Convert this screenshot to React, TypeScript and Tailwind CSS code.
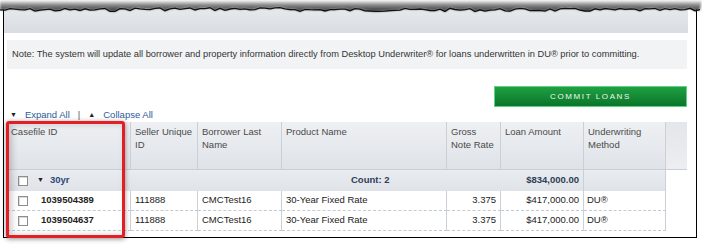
import React from "react";

const cols = "grid grid-cols-[124px_67px_84px_165px_54px_83px_82px_21px]";

function TornEdge() {
  // jagged paper edge along the top of the clipped screenshot
  const pts: string[] = [];
  let seed = 7;
  for (let x = 0; x <= 702; x += 5) {
    seed = (seed * 9301 + 49297) % 233280;
    const y = 8.3 + (seed / 233280) * 3.2 - (x > 120 && x < 300 ? 0.8 : 0);
    pts.push(`${x},${y.toFixed(1)}`);
  }
  const line = "M" + pts.join(" L");
  return (
    <svg className="absolute left-0 top-0" width="702" height="16" viewBox="0 0 702 16">
      <defs>
        <linearGradient id="smudge" x1="0" y1="0" x2="0" y2="1">
          <stop offset="0" stopColor="#ffffff" />
          <stop offset="0.35" stopColor="#9a9a9a" />
          <stop offset="1" stopColor="#2a2a2a" />
        </linearGradient>
        <filter id="blur" x="-5%" y="-50%" width="110%" height="200%">
          <feGaussianBlur stdDeviation="1.2" />
        </filter>
      </defs>
      <path d={`${line} L702,0 L0,0 Z`} fill="url(#smudge)" filter="url(#blur)" />
      <path d={line} fill="none" stroke="#111" strokeWidth="1.3" />
    </svg>
  );
}

function Check() {
  return (
    <span className="inline-block h-[10px] w-[10px] shrink-0 border border-[#8c8c8c] bg-white shadow-[inset_1px_1px_1px_rgba(0,0,0,0.15)]" />
  );
}

const headers = [
  "Casefile ID",
  "Seller Unique ID",
  "Borrower Last Name",
  "Product Name",
  "Gross Note Rate",
  "Loan Amount",
  "Underwriting Method",
];

const rows = [
  { id: "1039504389", seller: "111888", name: "CMCTest16", product: "30-Year Fixed Rate", rate: "3.375", amount: "$417,000.00", method: "DU®" },
  { id: "1039504637", seller: "111888", name: "CMCTest16", product: "30-Year Fixed Rate", rate: "3.375", amount: "$417,000.00", method: "DU®" },
];

const cell = "flex items-center border-b border-dashed border-[#c3cad4] [border-right:1px_solid_#c9d0d8]";

export default function App() {
  return (
    <div className="relative h-[245px] w-[702px] overflow-hidden bg-white font-['Liberation_Sans',Arial,sans-serif] text-[9px] text-[#333]">
      <div className="ml-[3px] mt-[9px] flex h-[229px] w-[694px] flex-col border-x border-b border-black">
        {/* grey title band */}
        <div className="h-[24px] w-[684px] bg-gradient-to-b from-[#e6e9ec] to-[#d9dde2]" />

        {/* note */}
        <div className="ml-[3px] mt-[7px] flex h-[29px] w-[680px] items-center bg-[#f2f3f5] pl-[5px] text-[9.3px] text-[#333]">
          Note: The system will update all borrower and property information directly from Desktop Underwriter® for loans underwritten in DU® prior to committing.
        </div>

        {/* commit button */}
        <div className="mr-[9px] mt-[17px] flex justify-end">
          <button className="flex h-[21px] w-[193px] items-center justify-center border border-[#62cf82] bg-gradient-to-b from-[#1fa142] to-[#0a7529] text-[8px] tracking-[1.6px] text-[#eef8ee]">
            COMMIT LOANS
          </button>
        </div>

        {/* expand / collapse */}
        <div className="ml-[6px] mt-[1px] flex h-[14px] items-center gap-[5px] text-[9.5px] text-[#2c5a99]">
          <span className="text-[7px] text-[#222]">▼</span>
          <span className="ml-[3px]">Expand All</span>
          <span className="mx-[3px] text-[#555]">|</span>
          <span className="text-[7px] text-[#222]">▲</span>
          <span className="ml-[3px]">Collapse All</span>
        </div>

        {/* table */}
        <div className="ml-[3px] w-[680px] text-[9.5px]">
          <div className={`${cols} h-[47px] bg-gradient-to-b from-[#eef0f3] to-[#dfe3e8] text-[#4a4a4a]`}>
            {headers.map((h) => (
              <div key={h} className="border-r border-[#c9d0d8] pl-[4px] pr-[2px] pt-[3px] leading-[13px]">
                {h}
              </div>
            ))}
            <div className="bg-gradient-to-b from-[#e3e6ea] to-[#eceef1]" />
          </div>

          {/* group row */}
          <div className={`${cols} h-[22px] border-t border-[#c8cfd8] font-bold`}>
            <div className="col-span-3 flex items-center bg-gradient-to-b from-[#e9ecf0] to-[#dfe3e8] pl-[11px]">
              <Check />
              <span className="ml-[9px] text-[7px] text-[#222]">▼</span>
              <span className="ml-[6px] text-[#2d4a78]">30yr</span>
            </div>
            <div className="col-span-2 flex items-center bg-gradient-to-b from-[#e9ecf0] to-[#dfe3e8] pl-[69px] text-[#2f3d55]">
              Count: 2
            </div>
            <div className="flex items-center justify-end border-r border-[#c9d0d8] bg-gradient-to-b from-[#e9ecf0] to-[#dfe3e8] pr-[4px] text-[#2f3d55]">
              $834,000.00
            </div>
            <div className="border-r border-[#c9d0d8] bg-gradient-to-b from-[#e9ecf0] to-[#dfe3e8]" />
            <div />
          </div>

          {rows.map((r) => (
            <div key={r.id} className={`${cols} h-[20px] text-[#222]`}>
              <div className={`${cell} pl-[11px]`}>
                <Check />
                <span className="ml-[13px] font-bold">{r.id}</span>
              </div>
              <div className={`${cell} pl-[4px]`}>{r.seller}</div>
              <div className={`${cell} pl-[4px]`}>{r.name}</div>
              <div className={`${cell} pl-[4px]`}>{r.product}</div>
              <div className={`${cell} justify-end pr-[4px]`}>{r.rate}</div>
              <div className={`${cell} justify-end pr-[4px]`}>{r.amount}</div>
              <div className={`${cell} pl-[3px]`}>{r.method}</div>
              <div />
            </div>
          ))}
        </div>
      </div>

      <TornEdge />

      {/* red highlight around the Casefile ID column */}
      <div className="absolute left-[6px] top-[121px] h-[117px] w-[119px] rounded-[3px] border-[3px] border-[#e31e24] shadow-[0_1px_5px_rgba(0,0,0,0.45),inset_3px_0_6px_rgba(0,0,0,0.2)]" />
    </div>
  );
}
